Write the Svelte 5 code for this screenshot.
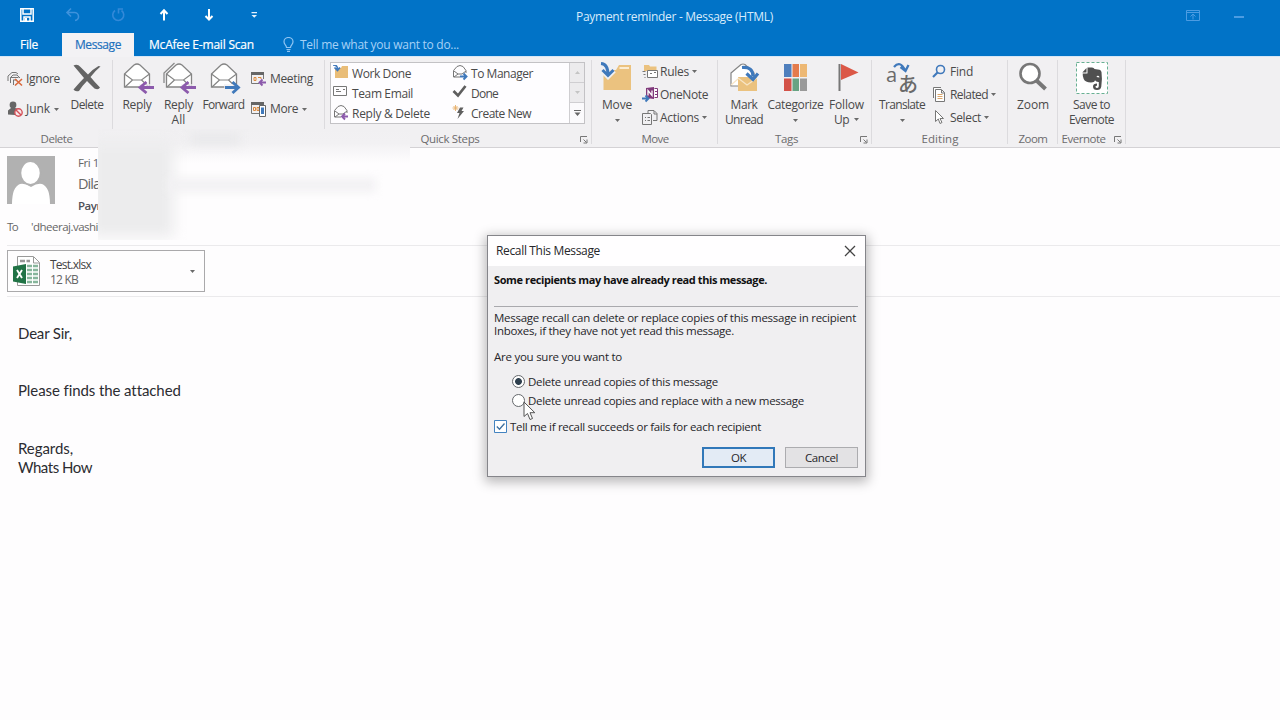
<script>
  function fit(node, width) {
    const n = node.textContent.length;
    node.style.letterSpacing = (width - node.getBoundingClientRect().width) / n + 'px';
  }
</script>

{#snippet t(text, w)}<span class="t" use:fit={w}>{text}</span>{/snippet}

{#snippet caret()}<svg class="caret" width="5" height="3" viewBox="0 0 5 3"><path d="M0 0h5L2.500 3z" fill="#6a6a6a" /></svg>{/snippet}

{#snippet launcher()}<svg class="launcher" width="8" height="8" viewBox="0 0 8 8"><path d="M.5 6V.5H7M3.500 3.500l3 3M7 3.500V7H3.500" fill="none" stroke="#777" /></svg>{/snippet}

{#snippet envelope(kind)}
  <svg width="34" height="32" viewBox="0 0 34 32" fill="none">
    {#if kind === 'all'}<path d="M2 21V11L12.500 1" stroke="#8a8a8a" stroke-width="1.300" />{/if}
    <path d="M4.500 12 14 3Q17 1 20 3l9.500 9v13h-25z" fill="#fff" stroke="#858585" stroke-width="1.300" />
    <path d="m4.500 12 8 6h9l8-6M5 25l7.500-7M29 25l-7.500-7" stroke="#858585" stroke-width="1.200" />
    {#if kind === 'forward'}
      <path d="M17 22h16v11H17z" fill="#f1f0f2" opacity=".7" />
      <path d="M18 25.500h13.500M25.500 20l6 5.500-6 5.500" stroke="#4079bb" stroke-width="2.800" />
    {:else}
      <path d="M19 22h15v11H19z" fill="#f1f0f2" opacity=".7" />
      <path d="M34 25.500H20M26.500 20l-6.500 5.500 6.500 5.500" stroke="#8c5aac" stroke-width="2.800" />
    {/if}
  </svg>
{/snippet}

{#snippet miniMail(color, dir)}
  <svg width="16" height="16" viewBox="0 0 16 16" fill="none">
    <path d="M1.500 5.500 5 1.500q3-2 6 0l3 4V8M1.500 5.500V12H8M2 6l4 3h4l4-3M2 12l4-3" stroke="#777" />
    {#if dir === 'r'}<path d="M8 11.500h6M11.500 8.500l3 3-3 3" stroke={color} stroke-width="1.900" />
    {:else}<path d="M9 11.500h6M12 8.500l-3 3 3 3" stroke={color} stroke-width="1.900" />{/if}
  </svg>
{/snippet}

<div class="window">
  <header>
    <div class="titlebar">
      <div class="qat">
        <svg width="16" height="16" viewBox="0 0 16 16"><path d="M1.800 1.800h12.400v12.400H1.800zM4 2v5h8V2M5 14v-4h6v4" fill="none" stroke="#fff" stroke-width="1.500" /><path d="M6 11h2v3H6z" fill="#fff" /></svg>
        <svg width="16" height="16" viewBox="0 0 16 16"><path d="M6 1.500 2 5.500l4 4M2 5.500h7a4 4 0 0 1 1 8" fill="none" stroke="#3e92dc" stroke-width="1.600" /></svg>
        <svg width="16" height="16" viewBox="0 0 16 16"><path d="M11.500 3.500A5.500 5.500 0 1 1 5 3.500M8.500 6.500V2H13" fill="none" stroke="#3389d8" stroke-width="1.600" /></svg>
        <svg width="16" height="16" viewBox="0 0 16 16"><path d="M8 13.500V4M4.500 7 8 3.200 11.500 7" fill="none" stroke="#fff" stroke-width="2" /></svg>
        <svg width="16" height="16" viewBox="0 0 16 16"><path d="M8 2v10M4.500 9 8 12.500 11.500 9" fill="none" stroke="#fff" stroke-width="2" /></svg>
        <svg width="16" height="16" viewBox="0 0 16 16"><path d="M4.500 5h5.500v1.200H4.500zM4.500 8H10l-2.750 2.800z" fill="#e4f1fd" /></svg>
      </div>
      <div class="caption">{@render t('Payment reminder - Message (HTML)', 197)}</div>
      <div class="winbtns">
        <svg width="14" height="11" viewBox="0 0 14 11" fill="none" stroke="#4c9ce2"><path d="M.5.500h13v10H.5zM1 2.500h12M7 9.500V5M4.500 6.500 7 4l2.500 2.500" /></svg>
        <i></i>
      </div>
    </div>
    <nav>
      <span class="tab file">{@render t('File', 18)}</span>
      <span class="tab active">{@render t('Message', 46)}</span>
      <span class="tab mcafee">{@render t('McAfee E-mail Scan', 105)}</span>
      <span class="tab tell">
        <svg width="11" height="15" viewBox="0 0 11 15" fill="none" stroke="#8fc4f2" stroke-width="1.200"><path d="M3.500 10.500C3.500 8 1 7.500 1 4.800a4.400 4.200 0 0 1 9 0c0 2.700-2.500 3.200-2.500 5.700zM3.500 12.500h4M4 14.300h3" /></svg>
        {@render t('Tell me what you want to do...', 159)}
      </span>
    </nav>
  </header>

  <section class="ribbon">
    <div class="group" style:width="113px">
      <div class="tools">
        <div class="stack two" style:width="59px" style:margin-left="7px">
          <div class="row"><svg width="17" height="16" viewBox="0 0 17 16" fill="none" stroke="#777"><path d="M1 10V5l4-3.500h4L11 3M3.500 12V6.500h8M6.500 14V9M6 9h4M3.500 6.500 6 4h4l3 3" /><path d="m8 8 7 6.500M15 8l-7 6.500" stroke="#d9683c" stroke-width="1.600" /></svg>{@render t('Ignore', 34)}</div>
          <div class="row"><svg width="17" height="16" viewBox="0 0 17 16"><circle cx="6" cy="4" r="3.400" fill="#666" /><path d="M1 13.500V9.500l3-2.500h4l4 1-4 6z" fill="#666" /><circle cx="11.500" cy="11.500" r="3.700" fill="#f7e9ea" stroke="#d45159" stroke-width="1.400" /><path d="m9 9 5 5" stroke="#d45159" stroke-width="1.400" /></svg>{@render t('Junk', 24)}{@render caret()}</div>
        </div>
        <div class="big" style:width="42px">
          <svg width="30" height="32" viewBox="0 0 30 32"><path d="M1.500 3.500q4-2 7 1.500l7.500 7.500Q21 7 26.500 4l2 .500Q23 9 18.500 15q4.500 5.500 9.500 10.500-1.500 3-5.500 1L15 19q-5 5-8 10-4 1-5.500-1.500Q7 21 12 16 7 10 1.500 3.500z" fill="#646464" /></svg>
          {@render t('Delete', 33)}
        </div>
      </div>
      <div class="name">{@render t('Delete', 32)}</div>
    </div>

    <div class="group" style:width="212px">
      <div class="tools">
        <div class="big" style:width="38px" style:margin-left="5px">{@render envelope('reply')}{@render t('Reply', 29)}</div>
        <div class="big" style:width="45px">{@render envelope('all')}{@render t('Reply', 29)}{@render t('All', 14)}</div>
        <div class="big" style:width="45px">{@render envelope('forward')}{@render t('Forward', 42)}</div>
        <div class="stack two" style:margin-left="5px">
          <div class="row"><svg width="17" height="16" viewBox="0 0 17 16" fill="none"><path d="M.5 1.500h12V8M.5 1.500v11H8" stroke="#777" /><path d="M0 1h13v3H0z" fill="#666" /><path d="M3 6.500h2v3H3zM7 6.500h3V8" stroke="#dc8a3e" /><path d="M8.500 11.500H15M11.500 8.500l-3 3 3 3" stroke="#8c5aac" stroke-width="1.900" /></svg>{@render t('Meeting', 43)}</div>
          <div class="row"><svg width="17" height="16" viewBox="0 0 17 16" fill="none"><path d="M.5 1.500h12V5M.5 1.500v11H8" stroke="#777" /><path d="M0 1h13v3H0z" fill="#666" /><path d="M2.500 6.500h2v3h-2zM6 6.500h2v3H6z" stroke="#dc8a3e" /><path d="M8.500 4.500h6v11h-6z" fill="#fff" stroke="#666" /><path d="M10 6.500h3v6.500h-3z" fill="#4079bb" /></svg>{@render t('More', 28)}{@render caret()}</div>
        </div>
      </div>
    </div>

    <div class="group" style:width="267px">
      <div class="tools">
        <div class="gallery">
          <div class="steps first">
            <div class="row"><svg width="16" height="16" viewBox="0 0 16 16"><path d="M2 3h6l1-2h6v12H2z" fill="#e9bd78" /><path d="M0 0q5 0 4.500 5M1.500 2.500l3 3L7 2.500" fill="none" stroke="#4079bb" stroke-width="1.700" /></svg>{@render t('Work Done', 59)}</div>
            <div class="row"><svg width="16" height="16" viewBox="0 0 16 16" fill="none" stroke="#777"><path d="M.5 1.500h13v9H.5zM3 4.500h3M3 6.500h5M10 4.500h2" /></svg>{@render t('Team Email', 61)}</div>
            <div class="row">{@render miniMail('#8c5aac', 'l')}{@render t('Reply & Delete', 78)}</div>
          </div>
          <div class="steps">
            <div class="row">{@render miniMail('#4079bb', 'r')}{@render t('To Manager', 62)}</div>
            <div class="row"><svg width="16" height="16" viewBox="0 0 16 16"><path d="m1.500 6 4.500 4.500L13.500 1" fill="none" stroke="#5f5f5f" stroke-width="2.700" /></svg>{@render t('Done', 27)}</div>
            <div class="row"><svg width="16" height="16" viewBox="0 0 16 16"><path d="M3.500 0v6M.5 3h6M1.500 1l4 4M5.500 1l-4 4" stroke="#e6b06b" stroke-width=".9" /><path d="M8 2.500h3.500L9.500 6H12l-6.500 8 2-6H5z" fill="#5f5f5f" /></svg>{@render t('Create New', 60)}</div>
          </div>
          <div class="scroll">
            <span><svg width="5" height="3" viewBox="0 0 5 3"><path d="M0 3h5L2.500 0z" fill="#c4c4c4" /></svg></span>
            <span><svg width="5" height="3" viewBox="0 0 5 3"><path d="M0 0h5L2.500 3z" fill="#c4c4c4" /></svg></span>
            <span class="open"><svg width="7" height="6" viewBox="0 0 7 6"><path d="M0 0h7v1H0zM.5 2.500h6L3.500 6z" fill="#666" /></svg></span>
          </div>
        </div>
      </div>
      <div class="name" style:padding-right="17px">{@render t('Quick Steps', 59)}</div>
      {@render launcher()}
    </div>

    <div class="group" style:width="126px">
      <div class="tools">
        <div class="big" style:width="50px">
          <svg width="34" height="32" viewBox="0 0 34 32"><path d="M3.500 8H16l3-5h12v25H3.500z" fill="#ebc27f" /><path d="M19.500 6H29" stroke="#fff7e8" stroke-width="1.600" /><path d="M0 1q9 0 8 12M2 8.500 8 14.500l6-6" fill="none" stroke="#f1f0f2" stroke-width="5" /><path d="M1 1.500q7 .500 7 11.500M2.500 8 8 13.500 13.500 8" fill="none" stroke="#4079bb" stroke-width="3" /></svg>
          {@render t('Move', 30)}{@render caret()}
        </div>
        <div class="stack three">
          <div class="row"><svg width="17" height="16" viewBox="0 0 17 16"><path d="M2 1h5l1 1.500h6.500V7H2z" fill="#ebc27f" /><path d="M5.500 6.500h10v7h-10z" fill="#fff" stroke="#777" /><path d="M.5 7.500h3M1.500 10.500h2M2.500 13.500h1M8 9.500h2M12 8.500h2" stroke="#777" /></svg>{@render t('Rules', 29)}{@render caret()}</div>
          <div class="row"><svg width="17" height="16" viewBox="0 0 17 16" fill="none"><path d="M4 1l8-1v12l-8-1z" fill="#80397b" /><path d="M12.500 1.500h3v9h-3M13 4.500h2M13 7.500h2" fill="#fff" stroke="#80397b" /><path d="M6 8.500v-5l4 5v-5" stroke="#fff" stroke-width="1.300" /><path d="M0 11.500h6M3.500 8.500l3 3-3 3" stroke="#4079bb" stroke-width="1.900" /></svg>{@render t('OneNote', 48)}</div>
          <div class="row"><svg width="17" height="16" viewBox="0 0 17 16" fill="none" stroke="#777"><path d="M.5 3.500h8l1 1v10h-9zM3 7.500h1M3 10.500h1M5.500 7.500H8M5.500 10.500H8M6 3V.5h6l3 3v7h-4M12 1v3h3" /></svg>{@render t('Actions', 39)}{@render caret()}</div>
        </div>
      </div>
      <div class="name">{@render t('Move', 27)}</div>
    </div>

    <div class="group" style:width="154px">
      <div class="tools">
        <div class="big" style:width="52px">
          <svg width="32" height="32" viewBox="0 0 32 32" fill="none"><path d="M3 11 13 2.500q2-1 4 0l9 8.500v13H3z" fill="#fff" stroke="#858585" stroke-width="1.200" /><path d="M10 15h19v14H10z" fill="#ebc27f" /><path d="m10 16 9 7 10-7M3 23l7-6" stroke="#f8e5c6" stroke-width="1.300" /><path d="M14 5.500q11-1 11 9M18.500 11.500l6.500 6 5-6" stroke="#4079bb" stroke-width="3.200" /></svg>
          {@render t('Mark', 27)}{@render t('Unread', 38)}
        </div>
        <div class="big" style:width="51px">
          <svg width="26" height="32" viewBox="0 0 26 32"><path d="M1 2h7.500v13H1z" fill="#4f7fbd" /><path d="M9.500 2H16v13H9.500z" fill="#e47b4b" /><path d="M17 2h7v13h-7z" fill="#edb874" /><path d="M1 16.500h7.500V29H1z" fill="#d35248" /><path d="M9.500 16.500H16V29H9.500z" fill="#67a383" /><path d="M17 16.500h7V29h-7z" fill="#999" /></svg>
          {@render t('Categorize', 56)}{@render caret()}
        </div>
        <div class="big" style:width="51px">
          <svg width="24" height="32" viewBox="0 0 24 32"><path d="M4.500 2v27" stroke="#777" stroke-width="2" /><path d="m6 2 17.500 8.500L6 18z" fill="#db5847" /></svg>
          {@render t('Follow', 35)}<span class="inline">{@render t('Up', 15)}{@render caret()}</span>
        </div>
      </div>
      <div class="name" style:padding-right="17px">{@render t('Tags', 23)}</div>
      {@render launcher()}
    </div>

    <div class="group" style:width="136px">
      <div class="tools">
        <div class="big" style:width="60px">
          <div class="glyphs"><b>a</b><em>あ</em><svg width="18" height="12" viewBox="0 0 18 12"><path d="M1 5q6-7 11 3M7.500 5l5 4 3-6" fill="none" stroke="#4079bb" stroke-width="2.300" /></svg></div>
          {@render t('Translate', 46)}{@render caret()}
        </div>
        <div class="stack three">
          <div class="row"><svg width="17" height="16" viewBox="0 0 17 16" fill="none" stroke="#4079bb"><circle cx="8.500" cy="5.500" r="4" stroke-width="1.600" /><path d="M5.500 8.500 1 13" stroke-width="2.200" /></svg>{@render t('Find', 23)}</div>
          <div class="row"><svg width="17" height="16" viewBox="0 0 17 16" fill="none" stroke="#777"><path d="M1.500 11V.5H9M3.500 2.500h6l3 3v9h-9zM9.500 3v3h3" fill="#fff" /><path d="M5.500 7.500h5M5.500 9.500h5M5.500 11.500h5" stroke="#dba66c" /></svg>{@render t('Related', 38)}{@render caret()}</div>
          <div class="row"><svg width="17" height="16" viewBox="0 0 17 16"><path d="M3.500.5v11l2.800-2.500L8 13.500l2-1-2-4h3.500z" fill="#fff" stroke="#777" /></svg>{@render t('Select', 31)}{@render caret()}</div>
        </div>
      </div>
      <div class="name">{@render t('Editing', 37)}</div>
    </div>

    <div class="group" style:width="50px">
      <div class="tools"><div class="big" style:width="50px">
        <svg width="30" height="32" viewBox="0 0 30 32"><circle cx="12" cy="11.500" r="9.500" fill="#fff" stroke="#777" stroke-width="2.600" /><path d="m18.500 18.500 9 8.500" stroke="#777" stroke-width="4" /></svg>
        {@render t('Zoom', 32)}
      </div></div>
      <div class="name">{@render t('Zoom', 29)}</div>
    </div>

    <div class="group" style:width="68px">
      <div class="tools"><div class="big" style:width="67px">
        <svg width="32" height="32" viewBox="0 0 32 32"><path d="M.5.500h31v31H.5z" fill="#fff" stroke="#68b093" stroke-dasharray="3 2" /><path d="M11.500 5.500H16q2 0 2.500 1.500l5 .800q1.500.200 2 2.200.900 6-.200 14.500-.500 3.500-4.300 3.500-4 0-4-3.500 0-3 4-3v2.300q-1.500-.200-1.500 1t1.700 1.200q1.600 0 1.600-2V20q-2.800.200-3.800-1.700-.500 2.200-4 2.200-6-.200-7.300-3.500Q6.500 14 6.700 11.500H11q.500 0 .5-.500zM10.500 6v4.500H6.300z" fill="#505050" /><path d="M20.500 15q.500-1.800 2.300-1 .600.500.600 1.500z" fill="#fff" /></svg>
        {@render t('Save to', 37)}{@render t('Evernote', 45)}
      </div></div>
      <div class="name" style:padding-right="17px">{@render t('Evernote', 44)}</div>
      {@render launcher()}
    </div>
  </section>

  <section class="sender">
    <svg width="48" height="48" viewBox="0 0 48 48"><path d="M0 0h48v48H0z" fill="#b1b1b1" /><path d="M5 48q0-17 8-20 5-1 11 3 6-4 11-3 8 3 8 20z" fill="#fff" /><ellipse cx="23.500" cy="17" rx="10" ry="11.800" fill="#fff" stroke="#b1b1b1" stroke-width="1.500" /></svg>
    <div class="who">
      <span class="date">{@render t('Fri 1', 21)}</span>
      <span class="from">{@render t('Dila', 22)}</span>
      <span class="subject">{@render t('Paym', 29)}</span>
    </div>
  </section>
  <div class="to"><span>{@render t('To', 10)}</span><span>{@render t("'dheeraj.vashi", 67)}</span></div>

  <section class="attachments">
    <div class="file-card">
      <svg width="28" height="32" viewBox="0 0 28 32"><path d="M4.500 1.500h16l6 6v23h-22z" fill="#fff" stroke="#999" /><path d="M20.500 2v6h6" fill="none" stroke="#999" /><path d="M7 6h5M13.500 6H17" stroke="#999" stroke-width="2.500" /><path d="M14 11h5M20 11h5M14 15h5M20 15h5M14 19h5M20 19h5M14 23h5M20 23h5M14 27h5M20 27h5" stroke="#87b69c" stroke-width="2.500" /><path d="M0 11.500 13 9v20L0 26.500z" fill="#217346" /><path d="m4 15 5 8M9 15l-5 8" stroke="#fff" stroke-width="1.900" /></svg>
      <div class="meta"><span>{@render t('Test.xlsx', 41)}</span><span class="size">{@render t('12 KB', 28)}</span></div>
      {@render caret()}
    </div>
  </section>

  <article>
    <p>{@render t('Dear Sir,', 54)}</p>
    <p>{@render t('Please finds the attached', 162)}</p>
    <p>{@render t('Regards,', 55)}<br />{@render t('Whats How', 74)}</p>
  </article>

  <div class="redaction"><i class="wash"></i><i class="block"></i><i class="line"></i><i class="spot"></i></div>

  <div class="dialog">
    <div class="dlg-title">
      {@render t('Recall This Message', 104)}
      <svg width="12" height="12" viewBox="0 0 12 12"><path d="m1 1 10 10M11 1 1 11" stroke="#444" stroke-width="1.300" /></svg>
    </div>
    <div class="dlg-body">
      <div class="strong">{@render t('Some recipients may have already read this message.', 273)}</div>
      <div class="rule"></div>
      <div class="info">{@render t('Message recall can delete or replace copies of this message in recipient', 362)}<br />{@render t('Inboxes, if they have not yet read this message.', 240)}</div>
      <div class="ask">{@render t('Are you sure you want to', 128)}</div>
      <div class="radio"><i class="on"></i>{@render t('Delete unread copies of this message', 190)}</div>
      <div class="radio"><i></i>{@render t('Delete unread copies and replace with a new message', 276)}</div>
      <div class="check"><svg width="13" height="13" viewBox="0 0 13 13"><path d="M.5.500h12v12H.5z" fill="#fff" stroke="#4383c0" /><path d="m2.800 6.500 2.700 2.700 5-5.700" fill="none" stroke="#3c6f9f" stroke-width="1.300" /></svg>{@render t('Tell me if recall succeeds or fails for each recipient', 251)}</div>
      <div class="buttons"><button class="ok">{@render t('OK', 15)}</button><button>{@render t('Cancel', 33)}</button></div>
    </div>
    <svg class="pointer" width="14" height="20" viewBox="0 0 14 20"><path d="M1 1v14.500l3.500-3L7 18.500l2.500-1L7 11.700h4.800z" fill="#fff" stroke="#555" /></svg>
  </div>
</div>

<style>
  :global(body) { margin: 0; overflow: hidden; }
  .window { position: relative; width: 1280px; height: 720px; overflow: hidden; background: #fefdfe; color: #4a4a4a; font: 12px/15px "Open Sans", "Noto Sans", sans-serif; }
  svg { display: block; flex: none; }
  .t { display: inline-block; white-space: pre; }

  header { height: 56px; background: #0173c7; color: #fff; border-bottom: 1px solid #d5e6f6; }
  .titlebar { display: grid; grid-template-columns: 576px 1fr auto; height: 33px; }
  .qat { display: flex; gap: 29.5px; padding: 7px 0 0 19px; }
  .caption { padding-top: 9px; color: #d8ebfb; }
  .winbtns { display: flex; gap: 34px; padding: 10px 36px 0 0; }
  .winbtns i { width: 10px; height: 1.500px; margin-top: 6px; background: #4c9ce2; }
  nav { display: flex; height: 23px; line-height: 24px; }
  .file { width: 42px; padding-left: 20px; }
  .active { width: 72px; height: 24px; text-align: center; background: #f3f2f4; color: #1e71bd; }
  .mcafee { padding-left: 15px; }
  .tell { display: flex; align-items: center; gap: 6px; padding-left: 29px; color: #a6d1f6; }
  .file, .active, .mcafee { -webkit-text-stroke: .2px; }

  .ribbon { display: flex; height: 90px; background: #f1f0f2; border-bottom: 1px solid #d4d2d5; }
  .group { position: relative; display: flex; flex-direction: column; box-sizing: border-box; }
  .group::after { content: ""; position: absolute; right: 0; top: 3px; height: 84px; border-right: 1px solid #dcdbde; }
  .tools { display: flex; height: 74px; }
  .name { text-align: center; color: #6c6b6d; font-size: 11.500px; }
  .launcher { position: absolute; right: 4px; bottom: 3px; }
  .big { display: flex; flex-direction: column; align-items: center; padding-top: 5px; box-sizing: border-box; }
  .big > svg, .glyphs { margin-bottom: 3px; }
  .big > .caret { margin-top: 7px; }
  .inline { display: flex; align-items: center; gap: 5px; }
  .stack .row, .steps .row { display: flex; align-items: center; gap: 2px; }
  .row .t { padding-bottom: 1px; }
  .stack .row .caret { margin-left: 2px; }
  .two { padding-top: 7px; }
  .two .row { height: 30px; }
  .three { padding-top: 3px; }
  .three .row { height: 23px; gap: 1px; }
  .glyphs { position: relative; width: 32px; height: 32px; color: #6a6a6a; }
  .glyphs b { position: absolute; left: 0; top: 3px; font: 20px/20px "Open Sans", sans-serif; }
  .glyphs em { position: absolute; right: 0; bottom: 0; font: normal 500 20px/20px "Noto Sans CJK JP", sans-serif; }
  .glyphs svg { position: absolute; left: 7px; top: 0; }

  .gallery { display: flex; width: 253px; height: 60px; margin: 5px 0 0 5px; border: 1px solid #c3c2c5; background: #fefdff; }
  .steps { flex: 1; padding-left: 1px; }
  .steps.first { flex: 0 0 118px; padding-left: 2px; }
  .steps .row { height: 20px; gap: 3px; }
  .steps .row .t { padding-bottom: 0; }
  .scroll { width: 14px; border-left: 1px solid #cfced1; background: #ecebed; }
  .scroll span { display: flex; align-items: center; justify-content: center; height: 19px; border-bottom: 1px solid #cfced1; }
  .scroll .open { border: 0; height: 20px; background: #fbfafc; }

  .sender { display: flex; gap: 23px; height: 71px; padding: 8px 0 0 7px; box-sizing: border-box; }
  .who { display: flex; flex-direction: column; color: #666; }
  .date { height: 19px; margin-top: -1px; font-size: 11.500px; }
  .from { height: 24px; font-size: 14.500px; line-height: 20px; }
  .subject { font-weight: 600; color: #505058; font-size: 11.500px; }
  .to { display: flex; gap: 14px; height: 26px; padding-left: 7px; font-size: 11.500px; color: #666; }
  .attachments { margin-left: 7px; padding: 4px 0; border-top: 1px solid #ebeaec; border-bottom: 1px solid #ebeaec; }
  .file-card { display: flex; align-items: center; width: 196px; height: 40px; border: 1px solid #aaa9ab; color: #444; }
  .file-card > svg:first-child { margin-left: 5px; }
  .meta { display: flex; flex-direction: column; width: 140px; margin-left: 9px; padding-top: 1px; }
  .size { color: #666; }
  article { padding: 27px 18px; font: 15px/19px Lato, sans-serif; color: #2c2c31; }
  article p { margin: 0 0 39px; }
  article p:first-child { margin-bottom: 38px; }

  .redaction { position: absolute; left: 98px; top: 129px; width: 312px; height: 111px; overflow: hidden; }
  .redaction i { position: absolute; }
  .wash { inset: 0; background: linear-gradient(#f1f0f2 0, #f2f1f3 14px, #fefdfe 34px); }
  .block { left: -8px; top: 12px; width: 84px; height: 96px; background: #ececed; filter: blur(7px); }
  .line { left: 70px; top: 49px; width: 208px; height: 14px; background: #f2f1f3; filter: blur(5px); }
  .spot { left: 92px; top: 4px; width: 50px; height: 12px; background: #e9e9eb; filter: blur(5px); }

  .dialog { position: absolute; left: 487px; top: 235px; width: 377px; height: 240px; border: 1px solid #85858a; background: #f0eff1; box-shadow: 0 3px 11px 2px rgb(0 0 0 / .28); color: #26262a; font-size: 11.500px; line-height: 13px; }
  .dlg-title { display: flex; align-items: center; justify-content: space-between; height: 29px; padding: 0 9px 1px 8px; background: #fffeff; font-size: 12px; }
  .dlg-body { padding: 7px 7px 0 6px; }
  .strong { height: 33px; font-weight: 700; font-size: 11px; color: #111; }
  .rule { height: 1px; margin-bottom: 4px; background: #a9a9ad; }
  .info { height: 39px; white-space: nowrap; }
  .ask { height: 22px; }
  .radio { display: flex; align-items: center; gap: 3px; height: 19px; padding-left: 18px; }
  .radio i { box-sizing: border-box; width: 13px; height: 13px; border: 1px solid #65686c; border-radius: 50%; background: #fff; }
  .radio .on { background: radial-gradient(circle, #2e3f4e 3px, #fff 3.800px); }
  .check { display: flex; align-items: center; gap: 3px; height: 20px; margin-top: 6px; }
  .buttons { display: flex; justify-content: flex-end; gap: 10px; margin-top: 11px; }
  button { width: 73px; height: 21px; padding: 0; border: 1px solid #acacaf; background: #e3e2e4; color: inherit; font: inherit; }
  .ok { border: 2px solid #3178b9; background: #e3ebf5; }
  .pointer { position: absolute; left: 35px; top: 165px; }
</style>
